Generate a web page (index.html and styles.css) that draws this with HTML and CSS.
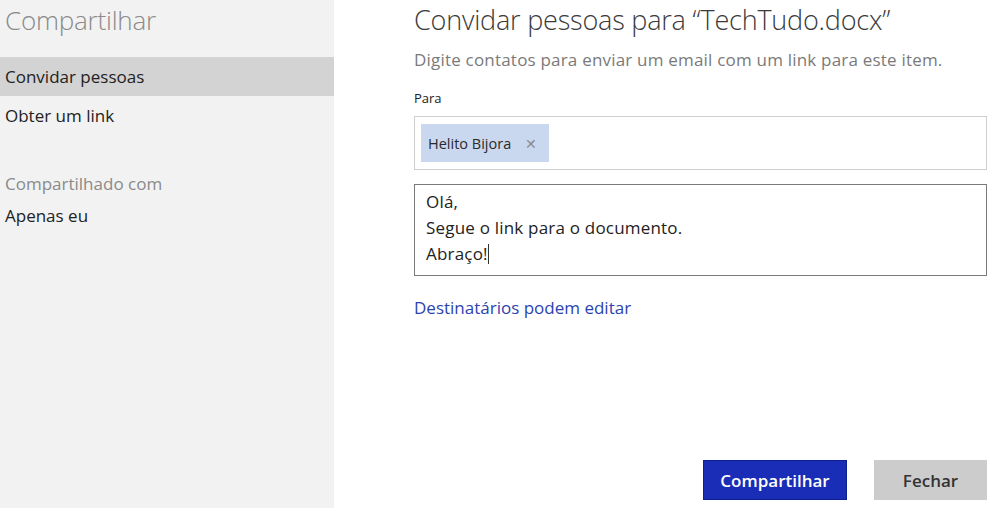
FILE: index.html
```html
<!DOCTYPE html>
<html lang="pt">
<head>
<meta charset="utf-8">
<title>Compartilhar</title>
<link rel="stylesheet" href="styles.css">
</head>
<body>
<div class="app">
  <aside class="sidebar">
    <h1 class="side-title">Compartilhar</h1>
    <nav class="side-nav">
      <div class="side-item selected">Convidar pessoas</div>
      <div class="side-item">Obter um link</div>
    </nav>
    <div class="side-section">Compartilhado com</div>
    <div class="side-item short">Apenas eu</div>
  </aside>
  <main class="main">
    <h2 class="main-title">Convidar pessoas para “TechTudo.docx”</h2>
    <p class="subtitle">Digite contatos para enviar um email com um link para este item.</p>
    <label class="label">Para</label>
    <div class="to-box">
      <span class="chip">Helito Bijora <span class="chip-x">✕</span></span>
    </div>
    <div class="message">
      <div>Olá,</div>
      <div>Segue o link para o documento.</div>
      <div>Abraço!<span class="caret"></span></div>
    </div>
    <a class="link">Destinatários podem editar</a>
    <div class="actions">
      <button class="btn primary">Compartilhar</button>
      <button class="btn secondary">Fechar</button>
    </div>
  </main>
</div>
</body>
</html>
```
FILE: styles.css
```css
html, body {
  margin: 0;
  padding: 0;
  background: #ffffff;
}
body {
  font-family: "Open Sans", "Noto Sans", sans-serif;
  color: #222;
}
.app {
  display: flex;
  width: 1000px;
  height: 508px;
  overflow: hidden;
}
.sidebar {
  width: 334px;
  flex: none;
  background: #f2f2f2;
  display: flex;
  flex-direction: column;
}
.side-title {
  margin: 0;
  padding: 3px 0 0 5px;
  height: 57px;
  box-sizing: border-box;
  font-weight: 300;
  font-size: 26px;
  color: #8a8a8a;
  letter-spacing: -0.2px;
  line-height: 34px;
}
.side-nav {
  display: flex;
  flex-direction: column;
}
.side-item {
  height: 39px;
  line-height: 39px;
  padding-left: 5px;
  font-size: 17px;
  color: #222;
}
.side-item.short {
  height: 34px;
  line-height: 34px;
}
.side-item.selected {
  background: #d3d3d3;
}
.side-section {
  margin-top: 34px;
  padding-left: 5px;
  height: 30px;
  line-height: 30px;
  font-size: 17px;
  color: #8a8a8a;
}
.main {
  flex: 1;
  padding: 0 13px 0 80px;
  display: flex;
  flex-direction: column;
}
.main-title {
  margin: 4px 0 0 0;
  font-weight: 300;
  font-size: 27px;
  color: #3a3a3a;
  letter-spacing: -0.2px;
  line-height: 32px;
}
.subtitle {
  margin: 13px 0 0 0;
  font-size: 17px;
  color: #7a7a7a;
  line-height: 22px;
  letter-spacing: 0.2px;
}
.label {
  margin-top: 18px;
  font-size: 13px;
  color: #222;
  line-height: 18px;
}
.to-box {
  margin-top: 9px;
  height: 54px;
  box-sizing: border-box;
  border: 1px solid #cfcfcf;
  padding: 7px 6px;
  display: flex;
  align-items: stretch;
}
.chip {
  background: #c9d8ef;
  padding: 0 12px 0 7px;
  font-size: 14.5px;
  color: #2a2a2a;
  display: flex;
  align-items: center;
  gap: 14px;
}
.chip-x {
  color: #8a8a8a;
  font-size: 14px;
}
.message {
  margin-top: 14px;
  height: 92px;
  box-sizing: border-box;
  border: 1.5px solid #7a7a7a;
  padding: 4px 11px;
  font-size: 17px;
  line-height: 26px;
  letter-spacing: 0.2px;
  color: #222;
}
.caret {
  display: inline-block;
  width: 1px;
  height: 20px;
  background: #333;
  vertical-align: -4px;
}
.link {
  margin-top: 21px;
  font-size: 17px;
  color: #2b43b0;
  line-height: 22px;
}
.actions {
  margin-top: auto;
  margin-bottom: 8px;
  display: flex;
  justify-content: flex-end;
  gap: 27px;
}
.btn {
  font-family: "Open Sans", "Noto Sans", sans-serif;
  font-size: 17px;
  font-weight: 600;
  height: 40px;
  border: none;
  cursor: pointer;
}
.btn.primary {
  width: 144px;
  background: #1a2db6;
  color: #ffffff;
  border: 1px solid #0e1f8e;
}
.btn.secondary {
  width: 113px;
  background: #cccccc;
  color: #333;
}
```
